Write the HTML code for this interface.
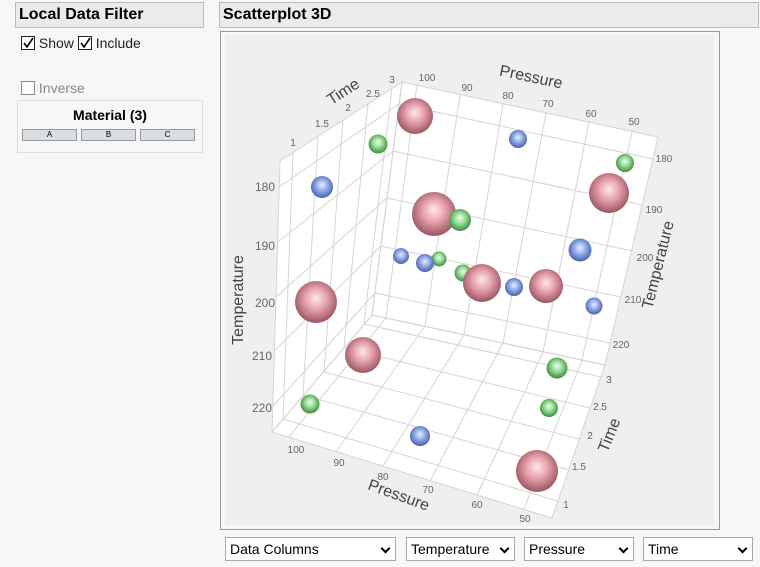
<!DOCTYPE html>
<html><head><meta charset="utf-8"><style>
body{margin:0;width:760px;height:567px;background:#f7f7f7;font-family:"Liberation Sans",sans-serif;position:relative;overflow:hidden}
.hdr{position:absolute;top:2px;background:#ebebeb;border:1px solid #bbb;font-weight:bold;font-size:16px;line-height:24px;padding-left:3px;box-sizing:border-box;height:26px}
.cb{display:inline-block;width:12px;height:12px;border:1px solid #222;background:#fff;vertical-align:-2px;position:relative}
.sel{position:absolute;top:537px;height:24px;box-sizing:border-box;border:1px solid #aaa;background:#fff;font-size:14px;line-height:22px;padding-left:4px}
.sel:after{content:"";position:absolute;right:6px;top:7px;width:5px;height:5px;border-right:2px solid #000;border-bottom:2px solid #000;transform:rotate(45deg)}
.btn{position:absolute;top:129px;height:12px;width:55px;background:#d9dee4;border:1px solid #999;box-sizing:border-box;font-size:8px;text-align:center;line-height:10px}
</style></head><body>
<div class="hdr" style="left:15px;width:189px">Local Data Filter</div>
<div class="hdr" style="left:219px;width:540px">Scatterplot 3D</div>
<div style="position:absolute;left:21px;top:35px;font-size:14px;color:#222"><span class="cb"><svg width="12" height="12" style="position:absolute;left:0;top:0"><path d="M2 6 L5 10 L11 1" stroke="#000" stroke-width="1.6" fill="none"/></svg></span> Show <span class="cb"><svg width="12" height="12" style="position:absolute;left:0;top:0"><path d="M2 6 L5 10 L11 1" stroke="#000" stroke-width="1.6" fill="none"/></svg></span> Include</div>
<div style="position:absolute;left:21px;top:80px;font-size:14px;color:#888"><span class="cb" style="border-color:#888"></span> Inverse</div>
<div style="position:absolute;left:17px;top:100px;width:186px;height:53px;border:1px solid #ddd;box-sizing:border-box"></div>
<div style="position:absolute;left:17px;top:107px;width:186px;text-align:center;font-weight:bold;font-size:14px">Material (3)</div>
<div class="btn" style="left:22px">A</div><div class="btn" style="left:81px">B</div><div class="btn" style="left:140px">C</div>
<div style="position:absolute;left:220px;top:31px;width:500px;height:499px;border:1px solid #999;box-sizing:border-box;background:#f7f7f7"></div>
<svg width="760" height="567" style="position:absolute;left:0;top:0" font-family="Liberation Sans, sans-serif">
<defs>
<radialGradient id="r" cx="0.5" cy="0.45" r="0.55" fx="0.5" fy="0.4"><stop offset="0" stop-color="#ffe8ee"/><stop offset="0.45" stop-color="#e8a4b0"/><stop offset="1" stop-color="#9a5560"/></radialGradient>
<radialGradient id="b" cx="0.5" cy="0.45" r="0.55" fx="0.5" fy="0.4"><stop offset="0" stop-color="#e8f0ff"/><stop offset="0.45" stop-color="#96b0ee"/><stop offset="1" stop-color="#4a60a8"/></radialGradient>
<radialGradient id="g" cx="0.5" cy="0.45" r="0.55" fx="0.5" fy="0.4"><stop offset="0" stop-color="#ecffec"/><stop offset="0.45" stop-color="#98de98"/><stop offset="1" stop-color="#3f8a3f"/></radialGradient>
</defs>
<rect x="225" y="35" width="489" height="490" fill="#efefef"/>
<polygon points="280,161 402,82 658,137 605,365 552,518 272,432" fill="#fff"/>
<g stroke="#d4d4d4" stroke-width="1" fill="none">
<polygon points="402,82 658,137 605,365 372,315"/>
<polygon points="280,161 402,82 372,315 272,432"/>
<polygon points="372,315 605,365 552,518 272,432"/>
<path d="M417,85L386,318M460,95L425,326M503,104L464,335M546,113L503,343M589,122L543,352M632,132L582,360"/>
<path d="M399,104L653,159M393,151L642,205M387,198L632,251M381,246L621,297M375,293L610,343"/>
<path d="M293,152L283,419M318,136L303,395M343,120L324,372M368,104L344,348M392,88L364,324"/>
<path d="M279,187L399,104M278,242L393,151M276,297L387,198M274,351L381,246M273,406L375,293"/>
<path d="M386,318L289,437M425,326L336,452M464,335L383,466M503,343L430,481M543,352L477,495M582,360L524,509"/>
<path d="M283,419L558,501M303,395L569,470M324,372L579,439M344,348L590,408M364,324L601,377"/>
</g>
<g fill="#666" font-size="10" text-anchor="middle">
<text x="427" y="81">100</text><text x="467" y="91">90</text><text x="508" y="99">80</text><text x="548" y="107">70</text><text x="591" y="117">60</text><text x="634" y="125">50</text>
<text x="664" y="162">180</text><text x="654" y="213">190</text><text x="645" y="261">200</text><text x="633" y="303">210</text><text x="621" y="348">220</text>
<text x="609" y="383">3</text><text x="600" y="410">2.5</text><text x="590" y="439">2</text><text x="579" y="470">1.5</text><text x="566" y="508">1</text>
<text x="296" y="453">100</text><text x="339" y="466">90</text><text x="383" y="480">80</text><text x="428" y="493">70</text><text x="477" y="508">60</text><text x="525" y="522">50</text>
<text x="293" y="146">1</text><text x="322" y="127">1.5</text><text x="348" y="111">2</text><text x="373" y="97">2.5</text><text x="392" y="83">3</text>
</g>
<g fill="#666" font-size="12" text-anchor="middle">
<text x="265" y="191">180</text><text x="265" y="250">190</text><text x="265" y="307">200</text><text x="262" y="360">210</text><text x="262" y="412">220</text>
</g>
<g fill="#444" font-size="16" text-anchor="middle">
<text transform="translate(346,96) rotate(-33)">Time</text>
<text transform="translate(530,82) rotate(12)">Pressure</text>
<text transform="translate(243,300) rotate(-90)">Temperature</text>
<text transform="translate(663,266) rotate(-76)">Temperature</text>
<text transform="translate(397,500) rotate(20)">Pressure</text>
<text transform="translate(614,437) rotate(-68)">Time</text>
</g>
<circle cx="415" cy="116" r="18" fill="url(#r)"/>
<circle cx="378" cy="144" r="9.5" fill="url(#g)"/>
<circle cx="518" cy="139" r="9" fill="url(#b)"/>
<circle cx="625" cy="163" r="9" fill="url(#g)"/>
<circle cx="322" cy="187" r="11" fill="url(#b)"/>
<circle cx="609" cy="193" r="20" fill="url(#r)"/>
<circle cx="434" cy="214" r="22" fill="url(#r)"/>
<circle cx="460" cy="220" r="11" fill="url(#g)"/>
<circle cx="401" cy="256" r="8" fill="url(#b)"/>
<circle cx="439" cy="259" r="7.5" fill="url(#g)"/>
<circle cx="425" cy="263" r="9" fill="url(#b)"/>
<circle cx="580" cy="250" r="11.5" fill="url(#b)"/>
<circle cx="463" cy="273" r="8.5" fill="url(#g)"/>
<circle cx="482" cy="283" r="19" fill="url(#r)"/>
<circle cx="514" cy="287" r="9" fill="url(#b)"/>
<circle cx="546" cy="286" r="17" fill="url(#r)"/>
<circle cx="594" cy="306" r="8.5" fill="url(#b)"/>
<circle cx="316" cy="302" r="21" fill="url(#r)"/>
<circle cx="363" cy="355" r="18" fill="url(#r)"/>
<circle cx="557" cy="368" r="10.5" fill="url(#g)"/>
<circle cx="549" cy="408" r="9" fill="url(#g)"/>
<circle cx="310" cy="404" r="9.5" fill="url(#g)"/>
<circle cx="420" cy="436" r="10" fill="url(#b)"/>
<circle cx="537" cy="471" r="21" fill="url(#r)"/>
</svg>
<div class="sel" style="left:225px;width:171px">Data Columns</div>
<div class="sel" style="left:406px;width:109px">Temperature</div>
<div class="sel" style="left:524px;width:110px">Pressure</div>
<div class="sel" style="left:643px;width:110px">Time</div>
</body></html>
